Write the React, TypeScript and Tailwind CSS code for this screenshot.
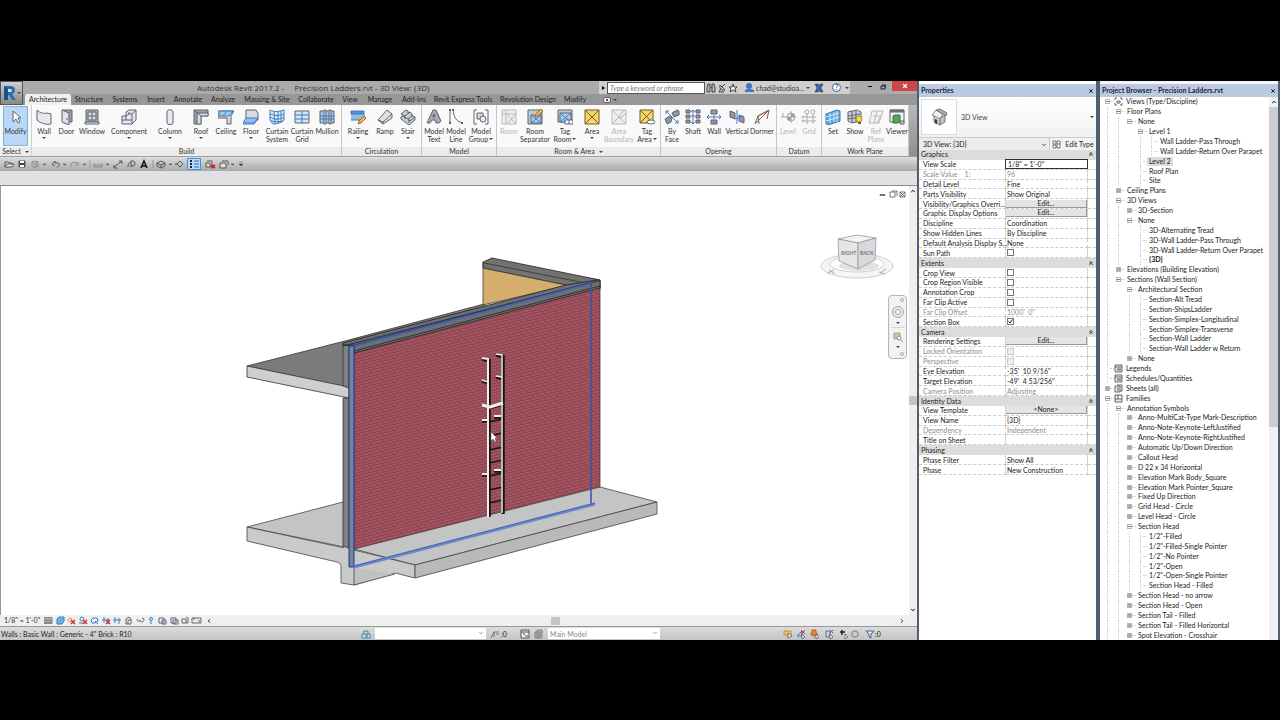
import type { ReactNode } from "react";
import { ChevronDown, ChevronUp, ChevronLeft, ChevronRight, ChevronsUp, X } from "lucide-react";

const LINE = "#5d6470";
const BLUE = "#3d7dbd";

// Ribbon glyphs, all drawn on a 16x16 grid.
const GLYPHS: Record<string, ReactNode> = {
  modify: <path d="M5 2v11l3-3 2 4 2-1-2-4h3z" fill="#fff" stroke={LINE} />,
  wall: <path d="M1 1c3 3 7 4 10 3l4 1v10c-3 1-10 0-14-4z" fill="#e4e7ec" stroke={LINE} />,
  door: (
    <g stroke={LINE}>
      <path d="M3 1h10v12H9" fill="#9aa0aa" />
      <path d="M3 1l7 3v12l-7-3z" fill="#dfe2e7" />
      <path d="M8 9v2" />
    </g>
  ),
  window: (
    <g stroke={LINE}>
      <path d="M2 1h12v12H2z" fill="#aeb4be" />
      <path d="M4 3h8v8H4z" fill="#d6dbe2" />
      <path d="M8 3v8M4 7h8" />
      <path d="M1 13h14v2H1z" fill="#e4e7ec" />
    </g>
  ),
  component: (
    <g stroke={LINE} fill="#e4e7ec">
      <path d="M1 7h4V3l3-2h7v10l-4 4H1z" />
      <path d="M5 7v4H1M5 11h6V5H8l-3 2M11 5l4-4M11 11v4M8 5V3" fill="none" />
    </g>
  ),
  column: <path d="M5 3c0-3 6-3 6 0v11c0 2-6 2-6 0z" fill="#e8eaee" stroke={LINE} />,
  roof: (
    <g stroke={LINE}>
      <path d="M1 1h14v6H8v8H1z" fill="#9ba1ab" />
      <path d="M4 4h11v3H8v8H4z" fill="#d9dce2" />
      <path d="M1 1l7 6" />
    </g>
  ),
  ceiling: (
    <g>
      <path d="M0 9V2h16l-3 5v8H9V9z" fill="#d7dbe1" stroke={LINE} />
      <path d="M3 2h12l-4 5H0z" fill="#9fcbee" stroke={BLUE} />
      <path d="M9 2L5 7" stroke={BLUE} />
    </g>
  ),
  floor: (
    <g>
      <path d="M3 1h10l2 3v7H3z" fill="#d7dbe1" stroke={LINE} />
      <path d="M3 9h12l-4 5H0z" fill="#8dc1ec" stroke={BLUE} />
      <path d="M0 14v1h11l4-5" fill="none" stroke={BLUE} />
    </g>
  ),
  curtainSystem: (
    <g fill="none" stroke={BLUE}>
      <path d="M1 1c4 2 8 2 14 0v10c-5 4-9 4-11 4L1 11z" fill="#dcecf8" />
      <path d="M5 2l1 13M9 2v13M12 2v12M1 5c5 2 9 2 14 0M1 8c5 3 9 3 14 0M2 12c5 1 9 1 12 0" />
    </g>
  ),
  curtainGrid: (
    <g>
      <path d="M1 2h14v12H1z" fill="#d3e6f5" stroke={LINE} />
      <path d="M8 2v12M1 6h14M1 10h14" stroke={BLUE} />
    </g>
  ),
  mullion: (
    <g stroke={LINE}>
      <path d="M1 2h14v12H1z" fill="#9ccbef" />
      <path d="M5 1h2v14H5zM10 1h2v14h-2z" fill="#dfe5ec" />
      <path d="M1 7h14M1 10h14" stroke={BLUE} />
    </g>
  ),
  railing: (
    <g>
      <path d="M1 2h13v3H1z" fill="#4c94d4" stroke={BLUE} />
      <path d="M1 11h10M2 5v6M4 5v6M6 5v6M8 5v6M10 5v6M12 5v4M14 5v3" stroke={BLUE} />
      <path d="M8 15l1-3 5-5 2 2-5 5z" fill="#f2b74b" stroke="#96702c" />
    </g>
  ),
  ramp: (
    <g stroke={LINE}>
      <path d="M1 11L10 1l5 4v4l-9 6z" fill="#dfe2e7" />
      <path d="M1 11l5 2 9-8M6 13v2" fill="none" />
    </g>
  ),
  stair: (
    <g stroke={LINE} fill="#c9cdd4">
      <path d="M1 5l5-4 2 1v2l2-1 2 2v2l3 1v3l-6 5-8-6V8l3-1z" />
      <path d="M1 5l4 2 5-4M4 8l4 2 5-4M8 11l2 1 5-4M5 7v3M9 10v4" fill="none" />
    </g>
  ),
  modelText: (
    <g stroke={LINE}>
      <path d="M1 14L7 1h3l5 11-2 2h-3l-1-3H6l-2 3z" fill="#a4a9b2" />
      <path d="M7 8l1-3 1 3z" fill="#fff" />
    </g>
  ),
  modelLine: (
    <g fill="none" stroke={LINE}>
      <path d="M2 1v13M5 1c1 8 4 12 10 13" />
      <path d="M1 1h2M1 14h2M4 1h2M14 13v2" strokeWidth="2" />
    </g>
  ),
  modelGroup: (
    <g fill="none" stroke={LINE}>
      <path d="M4 1H1v14h3M12 1h3v14h-3" />
      <path d="M4 4h6v6H4z" fill="#d5d8de" />
      <circle cx="10" cy="10" r="3" fill="#eceef1" />
    </g>
  ),
  room: (
    <g fill="#eee" stroke="#b9b9b9">
      <path d="M1 1h14v14H1z" />
      <path d="M5 1v14M1 5h14M6 5l9 10M15 5L6 15" />
    </g>
  ),
  roomSeparator: (
    <g stroke={LINE}>
      <path d="M1 1h14v14H1z" fill="#c3c8d0" />
      <path d="M4 6h10v8H4z" fill="#a6d2f0" />
      <path d="M4 6l10 8M14 6L4 14" stroke={BLUE} />
      <path d="M8 8l1-3 5-5 2 2-5 5z" fill="#f2b74b" stroke="#96702c" />
    </g>
  ),
  tagRoom: (
    <g stroke={LINE}>
      <path d="M1 1h14v12H1z" fill="#c3c8d0" />
      <path d="M3 4h11v9H3z" fill="#a6d2f0" />
      <path d="M3 4l11 9M14 4L3 13" stroke={BLUE} />
      <path d="M8 11h8v4H8zM12 11v4" fill="#fff" />
    </g>
  ),
  area: (
    <g stroke="#6b5d2a">
      <path d="M1 1h14v14H1z" fill="#f7d568" />
      <path d="M1 1l14 14M15 1L1 15" />
    </g>
  ),
  areaBoundary: (
    <g fill="#eee" stroke="#b9b9b9">
      <path d="M1 1h14v14H1z" />
      <path d="M1 1l14 14M15 1L1 15" />
      <path d="M8 9l1-3 5-5 2 2-5 5z" />
    </g>
  ),
  tagArea: (
    <g stroke="#6b5d2a">
      <path d="M1 1h13v13H1z" fill="#f7d568" />
      <path d="M1 1l13 13M14 1L1 14" />
      <ellipse cx="12" cy="13" rx="4" ry="2" fill="#fff" stroke={LINE} />
    </g>
  ),
  byFace: (
    <g>
      <path d="M8 4l5-3 2 1v4l-5 2zM1 10l5-3 2 2-1 4-4 2z" fill="#8f95a0" stroke={LINE} />
      <path d="M2 2l12 12M2 2v3M2 2h3M14 14v-3M14 14h-3" stroke={BLUE} fill="none" />
    </g>
  ),
  shaft: (
    <g>
      <path d="M1 1h4v3H1zM11 1h4v3h-4zM1 6h4v3H1zM11 6h4v3h-4zM1 11h4v3H1zM11 11h4v3h-4z" fill="#9197a1" stroke={LINE} />
      <path d="M8 1v14M6 7h4M6 3l2-2 2 2M6 13l2 2 2-2" stroke={BLUE} fill="none" />
    </g>
  ),
  opening: (
    <g>
      <path d="M5 1h6v4H5zM5 11h6v4H5z" fill="#9197a1" stroke={LINE} />
      <path d="M1 8h14M8 6v4M3 6L1 8l2 2M13 6l2 2-2 2" stroke={BLUE} fill="none" />
    </g>
  ),
  vertical: (
    <g>
      <path d="M1 2l5 2v6L1 8zM10 6l5 2v6l-5-2z" fill="#9197a1" stroke={LINE} />
      <path d="M8 1v14M6 10l8-3" stroke={BLUE} />
    </g>
  ),
  dormer: (
    <g fill="none">
      <path d="M1 15l3-8 11-6-2 9M4 7l1 8" stroke={LINE} />
      <path d="M2 14L14 2M4 7l10-5" stroke="#b0573f" />
    </g>
  ),
  level: (
    <g stroke="#aaa" fill="none">
      <path d="M1 8h15M3 4v4M11 2v12" />
      <circle cx="11" cy="8" r="4" fill="#eee" />
      <path d="M11 8V4a4 4 0 0 1 4 4zM11 8v4a4 4 0 0 1-4-4z" fill="#999" />
    </g>
  ),
  grid: (
    <g stroke="#aaa" fill="#fff">
      <path d="M6 5v10M12 5v10M3 8h12M3 12h12" />
      <circle cx="6" cy="3" r="2" />
      <circle cx="12" cy="3" r="2" />
      <circle cx="2" cy="8" r="1" />
      <circle cx="2" cy="12" r="1" />
    </g>
  ),
  set: (
    <g stroke={BLUE}>
      <path d="M1 5l11-4 3 1v10l-3 1-9 3-2-1z" fill="#5ba6df" />
      <path d="M5 4v10M9 3v10M12 2v11M1 8l13-4M1 12l13-4" stroke="#d6ebfa" />
    </g>
  ),
  show: (
    <g>
      <path d="M1 3l9-2 4 2v9l-9 2-4-2z" fill="#cbd0d8" stroke={LINE} />
      <path d="M5 2v12M9 2v11M1 7l12-2M1 10l12-2" stroke={LINE} />
      <circle cx="12" cy="10" r="3" fill="#ffd54a" stroke="#b78a1c" />
      <path d="M11 14h3" stroke={LINE} strokeWidth="2" />
    </g>
  ),
  refPlane: (
    <g fill="#f3f3f3" stroke="#b9b9b9">
      <path d="M4 2h11l-4 12H1zM5 7h9M9 2L6 14M12 8l-3 6" />
    </g>
  ),
  viewer: (
    <g>
      <path d="M1 1h14v12H1z" fill="#f4f4f4" stroke={LINE} />
      <path d="M1 2h14" stroke="#69707b" strokeWidth="3" />
      <path d="M4 7l2-1h5v6l-2 2H4z" fill="#58a45a" stroke="#35703a" />
      <path d="M11 12h4v3h-4z" fill="#ccc" stroke={LINE} />
    </g>
  ),
};

type Tool = { icon: string; label: string; sub?: string; w: string; arrow?: boolean; off?: boolean };
type Panel = { title: string; w: string; more?: boolean; tools: Tool[] };

const PANELS: Panel[] = [
  {
    title: "Build",
    w: "w-[310px]",
    tools: [
      { icon: "wall", label: "Wall", w: "w-6", arrow: true },
      { icon: "door", label: "Door", w: "w-[21px]" },
      { icon: "window", label: "Window", w: "w-[30px]" },
      { icon: "component", label: "Component", w: "w-11", arrow: true },
      { icon: "column", label: "Column", w: "w-[38px]", arrow: true },
      { icon: "roof", label: "Roof", w: "w-6", arrow: true },
      { icon: "ceiling", label: "Ceiling", w: "w-[26px]" },
      { icon: "floor", label: "Floor", w: "w-6", arrow: true },
      { icon: "curtainSystem", label: "Curtain", sub: "System", w: "w-7" },
      { icon: "curtainGrid", label: "Curtain", sub: "Grid", w: "w-[22px]" },
      { icon: "mullion", label: "Mullion", w: "w-7" },
    ],
  },
  {
    title: "Circulation",
    w: "w-20",
    tools: [
      { icon: "railing", label: "Railing", w: "w-8", arrow: true },
      { icon: "ramp", label: "Ramp", w: "w-[22px]" },
      { icon: "stair", label: "Stair", w: "w-6", arrow: true },
    ],
  },
  {
    title: "Model",
    w: "w-[75px]",
    tools: [
      { icon: "modelText", label: "Model", sub: "Text", w: "w-6" },
      { icon: "modelLine", label: "Model", sub: "Line", w: "w-5" },
      { icon: "modelGroup", label: "Model", sub: "Group", w: "w-[30px]", arrow: true },
    ],
  },
  {
    title: "Room & Area",
    more: true,
    w: "w-[164px]",
    tools: [
      { icon: "room", label: "Room", w: "w-6", off: true },
      { icon: "roomSeparator", label: "Room", sub: "Separator", w: "w-7" },
      { icon: "tagRoom", label: "Tag", sub: "Room", w: "w-8", arrow: true },
      { icon: "area", label: "Area", w: "w-[22px]", arrow: true },
      { icon: "areaBoundary", label: "Area", sub: "Boundary", w: "w-8", off: true },
      { icon: "tagArea", label: "Tag", sub: "Area", w: "w-6", arrow: true },
    ],
  },
  {
    title: "Opening",
    w: "w-[116px]",
    tools: [
      { icon: "byFace", label: "By", sub: "Face", w: "w-[22px]" },
      { icon: "shaft", label: "Shaft", w: "w-5" },
      { icon: "opening", label: "Wall", w: "w-[22px]" },
      { icon: "vertical", label: "Vertical", w: "w-6" },
      { icon: "dormer", label: "Dormer", w: "w-[26px]" },
    ],
  },
  {
    title: "Datum",
    w: "w-[45px]",
    tools: [
      { icon: "level", label: "Level", w: "w-[22px]", off: true },
      { icon: "grid", label: "Grid", w: "w-5", off: true },
    ],
  },
  {
    title: "Work Plane",
    w: "w-[87px]",
    tools: [
      { icon: "set", label: "Set", w: "w-[22px]" },
      { icon: "show", label: "Show", w: "w-[22px]" },
      { icon: "refPlane", label: "Ref", sub: "Plane", w: "w-5", off: true },
      { icon: "viewer", label: "Viewer", w: "w-[22px]" },
    ],
  },
];

const TABS = [
  { label: "Structure", w: "w-9" },
  { label: "Systems", w: "w-9" },
  { label: "Insert", w: "w-[26px]" },
  { label: "Annotate", w: "w-[38px]" },
  { label: "Analyze", w: "w-8" },
  { label: "Massing & Site", w: "w-14" },
  { label: "Collaborate", w: "w-[42px]" },
  { label: "View", w: "w-[26px]" },
  { label: "Manage", w: "w-[34px]" },
  { label: "Add-Ins", w: "w-[34px]" },
  { label: "Revit Express Tools", w: "w-16" },
  { label: "Revolution Design", w: "w-[66px]" },
  { label: "Modify", w: "w-7" },
];

type Prop = {
  name: string;
  kind?: "head" | "edit" | "check" | "input";
  value?: string;
  on?: boolean;
  off?: boolean;
};

const PROPS: Prop[] = [
  { name: "Graphics", kind: "head" },
  { name: "View Scale", kind: "input", value: "1/8\" = 1'-0\"" },
  { name: "Scale Value    1:", value: "96", off: true },
  { name: "Detail Level", value: "Fine" },
  { name: "Parts Visibility", value: "Show Original" },
  { name: "Visibility/Graphics Overri...", kind: "edit", value: "Edit..." },
  { name: "Graphic Display Options", kind: "edit", value: "Edit..." },
  { name: "Discipline", value: "Coordination" },
  { name: "Show Hidden Lines", value: "By Discipline" },
  { name: "Default Analysis Display S...", value: "None" },
  { name: "Sun Path", kind: "check" },
  { name: "Extents", kind: "head" },
  { name: "Crop View", kind: "check" },
  { name: "Crop Region Visible", kind: "check" },
  { name: "Annotation Crop", kind: "check" },
  { name: "Far Clip Active", kind: "check" },
  { name: "Far Clip Offset", value: "1000'  0\"", off: true },
  { name: "Section Box", kind: "check", on: true },
  { name: "Camera", kind: "head" },
  { name: "Rendering Settings", kind: "edit", value: "Edit..." },
  { name: "Locked Orientation", kind: "check", off: true },
  { name: "Perspective", kind: "check", off: true },
  { name: "Eye Elevation", value: "-35'  10 9/16\"" },
  { name: "Target Elevation", value: "-49'  4 53/256\"" },
  { name: "Camera Position", value: "Adjusting", off: true },
  { name: "Identity Data", kind: "head" },
  { name: "View Template", kind: "edit", value: "<None>" },
  { name: "View Name", value: "{3D}" },
  { name: "Dependency", value: "Independent", off: true },
  { name: "Title on Sheet", value: "" },
  { name: "Phasing", kind: "head" },
  { name: "Phase Filter", value: "Show All" },
  { name: "Phase", value: "New Construction" },
];

// [depth, label, toggle] where toggle is "-" open, "+" closed, "" leaf
const TREE: [number, string, string][] = [
  [0, "Views (Type/Discipline)", "-"],
  [1, "Floor Plans", "-"],
  [2, "None", "-"],
  [3, "Level 1", "-"],
  [4, "Wall Ladder-Pass Through", ""],
  [4, "Wall Ladder-Return Over Parapet", ""],
  [3, "Level 2", ""],
  [3, "Roof Plan", ""],
  [3, "Site", ""],
  [1, "Ceiling Plans", "+"],
  [1, "3D Views", "-"],
  [2, "3D-Section", "+"],
  [2, "None", "-"],
  [3, "3D-Alternating Tread", ""],
  [3, "3D-Wall Ladder-Pass Through", ""],
  [3, "3D-Wall Ladder-Return Over Parapet", ""],
  [3, "{3D}", ""],
  [1, "Elevations (Building Elevation)", "+"],
  [1, "Sections (Wall Section)", "-"],
  [2, "Architectural Section", "-"],
  [3, "Section-Alt Tread", ""],
  [3, "Section-ShipsLadder", ""],
  [3, "Section-Simplex-Longitudinal", ""],
  [3, "Section-Simplex-Transverse", ""],
  [3, "Section-Wall Ladder", ""],
  [3, "Section-Wall Ladder w Return", ""],
  [2, "None", "+"],
  [0, "Legends", ""],
  [0, "Schedules/Quantities", ""],
  [0, "Sheets (all)", "+"],
  [0, "Families", "-"],
  [1, "Annotation Symbols", "-"],
  [2, "Anno-MultiCat-Type Mark-Description", "+"],
  [2, "Anno-Note-Keynote-LeftJustified", "+"],
  [2, "Anno-Note-Keynote-RightJustified", "+"],
  [2, "Automatic Up/Down Direction", "+"],
  [2, "Callout Head", "+"],
  [2, "D 22 x 34 Horizontal", "+"],
  [2, "Elevation Mark Body_Square", "+"],
  [2, "Elevation Mark Pointer_Square", "+"],
  [2, "Fixed Up Direction", "+"],
  [2, "Grid Head - Circle", "+"],
  [2, "Level Head - Circle", "+"],
  [2, "Section Head", "-"],
  [3, "1/2\"-Filled", ""],
  [3, "1/2\"-Filled-Single Pointer", ""],
  [3, "1/2\"-No Pointer", ""],
  [3, "1/2\"-Open", ""],
  [3, "1/2\"-Open-Single Pointer", ""],
  [3, "Section Head - Filled", ""],
  [2, "Section Head - no arrow", "+"],
  [2, "Section Head - Open", "+"],
  [2, "Section Tail - Filled", "+"],
  [2, "Section Tail - Filled Horizontal", "+"],
  [2, "Spot Elevation - Crosshair", "+"],
];

// A guide line runs down a level while that level still has a later sibling.
function hasLater(index: number, depth: number) {
  for (let j = index + 1; j < TREE.length; j++) {
    if (TREE[j][0] < depth) return false;
    if (TREE[j][0] === depth) return true;
  }
  return depth < 3;
}

function Caret() {
  return (
    <svg viewBox="0 0 4 2" className="h-0.5 w-1 shrink-0" fill="#444">
      <path d="M0 0h4L2 2z" />
    </svg>
  );
}

function TitleBar() {
  return (
    <div className="flex h-[13px] items-center bg-[#ababab] text-[#333]">
      <h1 className="flex-1 pl-[174px] font-['Open_Sans',sans-serif] text-[8px] leading-[13px] whitespace-pre">
        Autodesk Revit 2017.2 -     Precision Ladders.rvt - 3D View: {"{3D}"}
      </h1>
      <div className="flex h-full shrink-0 items-center bg-[#cfcfcf]">
        <button aria-label="Expand search" className="flex h-full w-2 items-center justify-center">
          <svg viewBox="0 0 3 4" className="h-1 w-[3px]"><path d="M0 0l3 2-3 2z" /></svg>
        </button>
        <input
          aria-label="Search"
          placeholder="Type a keyword or phrase"
          className="h-3 w-[98px] border border-[#555] bg-white px-0.5 text-[7px] italic placeholder:text-[#777]"
        />
        <svg viewBox="0 0 34 12" className="h-3 w-[34px]" fill="none" stroke="#444">
          <path d="M2 10V6l1-4h2v8zM7 10V2h2l1 4v4zM5 5h2" fill="#bbb" />
          <path d="M15 3l5 5M14 10l2-4M14 10h5M20 2l-3 3M15 3c-1 4 2 6 5 5" />
          <path d="M28 2l1 3h3l-2 2 1 3-3-2-3 2 1-3-2-2h3z" fill="#eee" />
        </svg>
        <button className="flex items-center gap-0.5 pl-1.5 text-[7px] leading-[12px] whitespace-nowrap">
          <svg viewBox="0 0 9 9" className="size-[9px]" fill="#3f76c4">
            <circle cx="4" cy="3" r="3" />
            <path d="M0 9V7l3-1h3l3 1v2z" />
          </svg>
          chad@studioa...
          <Caret />
        </button>
        <svg viewBox="0 0 10 10" className="ml-1 size-[10px]">
          <path d="M1 1h3l1 2 1-2h3L7 5l2 4H6L5 7 4 9H1l2-4z" fill="#3b68aa" stroke="#223" strokeWidth="0.5" />
        </svg>
        <button aria-label="Help" className="flex items-center gap-1 pr-px pl-2">
          <span className="flex size-[9px] items-center justify-center rounded-full border border-[#46628e] bg-white text-[7px] leading-[7px] font-bold text-[#2c5aa0]">
            ?
          </span>
          <Caret />
        </button>
      </div>
      <div className="flex h-full shrink-0 items-start">
        <button aria-label="Minimize" className="flex h-[11px] w-[26px] items-center justify-end pr-1">
          <span className="h-px w-1 bg-black" />
        </button>
        <button aria-label="Restore" className="flex h-[11px] w-4 items-center justify-start pl-1">
          <svg viewBox="0 0 6 6" className="size-1.5" fill="none" stroke="#222"><path d="M1 2h4v3H1zM2 1h4v3" /></svg>
        </button>
        <button aria-label="Close" className="flex h-[10px] w-[25px] items-center justify-center bg-[#cf4444] text-white">
          <X className="size-1.5" strokeWidth={5} />
        </button>
      </div>
    </div>
  );
}

function TabRow() {
  return (
    <nav className="flex h-[11px] items-center bg-[#979797] pl-0.5 text-[7px] leading-[11px] text-[#222]">
      <button className="h-full w-[46px] shrink-0 rounded-t-xs bg-[#efefef] whitespace-nowrap">Architecture</button>
      {TABS.map((t) => (
        <button key={t.label} className={`flex h-full shrink-0 justify-center whitespace-nowrap ${t.w}`}>
          {t.label}
        </button>
      ))}
      <button aria-label="Ribbon display" className="ml-3.5 flex items-center gap-0.5">
        <span className="flex h-1.5 w-2 items-center justify-center rounded-xs border border-[#666] bg-[#eee]">
          <span className="size-0.5 bg-[#555]" />
        </span>
        <Caret />
      </button>
    </nav>
  );
}

function Ribbon() {
  return (
    <div className="flex h-[52px] border-b border-[#a0a0a0] bg-linear-to-b from-[#b9b9b9] to-[#8f8f8f]">
      <section className="flex w-8 shrink-0 flex-col items-center border-r border-[#d2d2d2] bg-[#f8f8f8]">
        <div className="flex flex-1 pt-px">
          <button className="flex h-10 w-[25px] flex-col items-center border border-[#86b3dc] bg-[#b8d8f5] pt-0.5 text-[7px] leading-[8px] text-[#333]">
            <svg viewBox="0 0 16 16" className="size-4 shrink-0">{GLYPHS.modify}</svg>
            <span className="mt-0.5">Modify</span>
          </button>
        </div>
        <button className="flex h-[9px] w-full items-center justify-center gap-1 bg-[#ececec] text-[7px] leading-[9px] text-[#333]">
          Select <Caret />
        </button>
      </section>
      {PANELS.map((p) => (
        <section key={p.title} className={`flex shrink-0 flex-col border-r border-[#c6c6c6] bg-[#f9f9f9] ${p.w}`}>
          <div className="flex flex-1">
            {p.tools.map((t) => (
              <button
                key={t.icon}
                className={`flex shrink-0 flex-col items-center pt-1 text-[7px] leading-[8px] whitespace-nowrap ${t.w} ${
                  t.off ? "text-[#b4b4b4]" : "text-[#333]"
                }`}
              >
                <svg viewBox="0 0 16 16" className="mb-0.5 size-4 shrink-0" fill="none">{GLYPHS[t.icon]}</svg>
                <span>{t.label}</span>
                {t.sub && (
                  <span className="flex items-center gap-px">
                    {t.sub}
                    {t.arrow && <Caret />}
                  </span>
                )}
                {t.arrow && !t.sub && <span className="pt-0.5"><Caret /></span>}
              </button>
            ))}
          </div>
          <div className="flex h-[9px] items-center justify-center gap-1 bg-[#ececec] text-[7px] leading-[9px] text-[#333]">
            {p.title} {p.more && <Caret />}
          </div>
        </section>
      ))}
    </div>
  );
}

function QuickAccess() {
  return (
    <div className="flex h-[14px] items-center bg-linear-to-b from-[#dedede] to-[#a9a9a9]">
      <svg viewBox="0 0 246 14" className="h-[14px] w-[246px] shrink-0" fill="none" stroke="#555">
        <path d="M5 10V5h3l1 1h3v1M5 10l2-3h7l-2 3z" fill="#e8e8e8" />
        <path d="M19 4h6v6h-6z" fill="#444" />
        <path d="M20 4h4v2h-4zM20 8h4v2h-4z" fill="#fff" stroke="none" />
        <g stroke="#8c8c8c">
          <path d="M32 5l3-1 3 1v4l-3 2-3-2zM35 7v4M32 5l3 2 3-2M36 8h3" />
          <path d="M71 10V7c0-2 6-2 6 0M78 5v3h-3" />
          <path d="M94 6v4h8V6M94 8h8" />
        </g>
        <path d="M52 7l3-3v2h3c2 0 2 4-1 4M52 7l3 2" />
        <path d="M114 10l8-6M114 8v3h3M119 4h3v3" />
        <path d="M128 10c0-4 2-5 3-5M131 4h2a2 2 0 1 1-1 5l-1 1z" />
        <path d="M141 11l3-7 3 7M142 9h4" stroke="#111" strokeWidth="1.500" />
        <path d="M157 6l4-2 4 2v3l-4 2-4-2zM157 6l4 2 4-2M161 8v3" />
        <path d="M177 7l3-3 3 3-3 3zM177 7h-2" />
        <path d="M187.500 1.500h13v11h-13z" fill="#b9dbf6" stroke="#4b8fce" />
        <path d="M190 4h2M190 7h2M190 10h2" stroke="#222" strokeWidth="2" />
        <path d="M194 4h5M194 7h5M194 10h5" stroke="#36c" />
        <path d="M207 4h5v5M206 6h4v4h-4z" fill="#ddd" />
        <path d="M211 8l4 3M215 8l-4 3" stroke="#c22" strokeWidth="2" />
        <path d="M222 4h6v4M220 6h6v5h-6z" fill="#ddd" />
        <path d="M43 7h3l-1 1zM63 7h3l-1 1zM83 7h3l-1 1zM106 7h3l-1 1zM169 7h3l-1 1zM231 7h3l-1 1zM239 7h4l-2 2zM239 5h4" fill="#333" strokeWidth="0.500" />
        <path d="M90 3v8M153 3v8" stroke="#999" />
      </svg>
    </div>
  );
}

function ModelDrawing() {
  return (
    <svg viewBox="1 186 908 429" className="h-full w-full" strokeLinejoin="round">
      <defs>
        <pattern id="brick" width="6" height="6" patternUnits="userSpaceOnUse" patternTransform="skewY(-14.4)">
          <rect width="6" height="6" fill="#a85662" />
          <path d="M0 0.500h6M0 3.500h6M2 0.500v3M5 3.500v3" stroke="#743a44" strokeWidth="0.600" />
        </pattern>
      </defs>

      {/* floor slab and footing */}
      <g stroke="#444" strokeWidth="0.800">
        <path d="M247 527L343 502L600 487L657 502L415 565L354 549z" fill="#c4c4c4" />
        <path d="M247 527L354 550L415 565V578L395 573L354 585L341 583V566Q341 563 337 562L247 541z" fill="#cacaca" />
        <path d="M415 565L657 502V514L415 578z" fill="#b9b9b9" />
        <path d="M354 568V585L395 574" fill="#c0c0c0" />
      </g>
      <path d="M344 360H600V487L354 549H344z" fill="#c4c4c4" />
      <path d="M247 400H343V501L247 526z" fill="#fff" />

      {/* roof slab */}
      <g stroke="#333" strokeWidth="0.800">
        <path d="M247 366L345 341L484 304L490 320L349 388z" fill="#7b7b7b" />
        <path d="M247 366L349 387V398L247 377z" fill="#cfcfcf" />
      </g>

      {/* inner wall and back parapet */}
      <path d="M483 262V305L570 285L600 290V280z" fill="#d5ad6c" stroke="#444" strokeWidth="0.800" />
      <path d="M483 262L492 258L600 280V288L566 285L483 268z" fill="#727272" stroke="#222" strokeWidth="0.800" />
      <path d="M484 263L590 284" stroke="#333" strokeWidth="0.800" />

      {/* brick wall with cap */}
      <path d="M343 398H349V548L343 546z" fill="#7d8280" stroke="#333" strokeWidth="0.800" />
      <path d="M343 345H349V388L343 386z" fill="#7d8280" stroke="#333" strokeWidth="0.800" />
      <path d="M354 352L600 287V487L354 549z" fill="url(#brick)" stroke="#444" strokeWidth="0.800" />
      <path d="M343 343L566 285L597 280L600 281V288L354 353V345H343z" fill="#6d6f72" stroke="#222" strokeWidth="0.800" />
      <path d="M343 346L598 281M354 351L600 286" stroke="#222" strokeWidth="0.800" />

      {/* selection outline */}
      <path d="M350 347L592 283" stroke="#4a66a0" strokeWidth="2" />
      <path d="M350 346L592 282" stroke="#1f3c9c" strokeWidth="0.800" />
      <path d="M349 346H354V567H349z" fill="#75839b" stroke="#1c3796" />
      <path d="M591 282V504" stroke="#3b50a4" strokeWidth="1.500" />
      <path d="M354 567L595 504" stroke="#6d88c8" strokeWidth="3" />
      <path d="M354 566L595 503" stroke="#3859ae" strokeWidth="0.800" />

      {/* ladder */}
      <g fill="none" stroke="#141414">
        <path d="M489 359V517" strokeWidth="3.500" />
        <path d="M503 355V514" strokeWidth="3.500" />
        <path
          d="M489 409L503 405M489 422L503 419M489 436L503 433M489 450L503 447M489 463L503 460M489 476L503 473M489 490L503 487M489 503L503 500"
          strokeWidth="1.500"
        />
        <path d="M482 359L489 361M496 355L503 357M482 381L489 383M496 377L503 379" strokeWidth="3" />
        <path d="M482 421H489M494 417H502M482 475H489M494 471H502" strokeWidth="3.500" />
      </g>
      <g fill="none" stroke="#f0ede8">
        <path d="M482 358L488 359V517" strokeWidth="2" />
        <path d="M496 354L502 355V513" strokeWidth="1.500" />
        <path d="M482 380L488 382M496 376L502 377" strokeWidth="1.500" />
        <path d="M482 405L490 407L503 403" strokeWidth="3" />
        <path d="M482 420H488M494 416H501M482 474H488M494 470H501" strokeWidth="2" />
      </g>
      <path d="M491 432V441L493 439L495 442L496 441L495 438H497z" fill="#fff" stroke="#555" strokeWidth="0.500" />
    </svg>
  );
}

function ViewCube() {
  return (
    <svg viewBox="820 232 76 50" className="h-[50px] w-[76px]" stroke="#aaa" strokeWidth="0.800">
      <ellipse cx="858" cy="266" rx="36" ry="12" fill="#f5f5f5" stroke="#c4c4c4" />
      <ellipse cx="858" cy="264" rx="27" ry="8" fill="#fff" stroke="#c4c4c4" />
      <ellipse cx="860" cy="266" rx="20" ry="5" fill="#e2e2e2" stroke="none" />
      <path d="M829 273l6-3M836 274l-6-4M880 272l6 2M887 269l-6 4" stroke="#999" />
      <path d="M839 239L858 235L877 238L859 243z" fill="#f3f3f3" stroke="#999" />
      <path d="M839 239L859 243V269L840 261z" fill="#e4e5e8" stroke="#999" />
      <path d="M859 243L877 238L876 260L859 269z" fill="#d8d9dd" stroke="#999" />
      <g fill="#777" stroke="none" fontSize="5" fontWeight="bold">
        <text x="842" y="255">RIGHT</text>
        <text x="861" y="255">BACK</text>
      </g>
    </svg>
  );
}

function Viewport() {
  return (
    <div className="flex min-h-0 flex-1 border-t border-[#8a8a8a] bg-white">
      <main className="relative min-w-0 flex-1 border-l border-[#999]">
        <div className="absolute inset-0">
          <ModelDrawing />
        </div>
        <div className="absolute top-[46px] right-3.5">
          <ViewCube />
        </div>
        <svg viewBox="0 0 28 8" className="absolute top-1 right-0.5 h-2 w-7" fill="none" stroke="#555">
          <path d="M1 4.500h5v1H1zM11 2h5v5h-5zM13 1h5v5M21 2h5v5h-5zM21 2l5 5M26 2l-5 5" strokeWidth="0.800" />
        </svg>
        <div className="absolute top-[109px] right-0.5 flex h-16 w-[19px] flex-col items-center justify-between rounded-sm border border-[#b5b5b5] bg-[#f2f2f2] py-0.5">
          <button aria-label="Close bar" className="mr-0.5 size-1 self-end rounded-full border border-[#aaa]" />
          <button aria-label="Steering wheel" className="flex size-3 items-center justify-center rounded-full border border-[#a5a9b5] bg-[#e6e7ea]">
            <span className="size-1.5 rounded-full border border-[#a5a9b5] bg-white" />
          </button>
          <Caret />
          <hr className="w-3.5 border-[#ccd4de]" />
          <button aria-label="Zoom">
            <svg viewBox="0 0 10 10" className="size-[10px]" fill="none" stroke="#888">
              <path d="M1 1h6v6H1z" fill="#b7d29c" stroke="#94b077" />
              <circle cx="6" cy="6" r="2" fill="#fff" />
              <path d="M8 8l2 2" />
            </svg>
          </button>
          <Caret />
          <button aria-label="Options" className="mr-0.5 size-1 self-end rounded-full border border-[#aaa]" />
        </div>
      </main>
      <div className="flex w-2 flex-col items-center justify-between bg-[#efefef] py-0.5">
        <ChevronUp className="size-1.5" strokeWidth={4} />
        <span className="h-[9px] w-2 bg-[#c4c4c4]" />
        <ChevronDown className="size-1.5" strokeWidth={4} />
      </div>
    </div>
  );
}

function ViewControls() {
  return (
    <div className="flex h-[11px] items-center bg-[#efefef] pl-1 text-[7px] leading-[11px] text-[#333]">
      <span className="w-10 shrink-0 whitespace-nowrap">1/8" = 1'-0"</span>
      <svg viewBox="44 0 158 11" className="h-[11px] w-[158px] shrink-0" fill="none" stroke="#5f6672">
        <path d="M44 2.500h8v6h-8zM46 3v5M48 3v5M50 3v5M44 5h8M44 7h8" strokeWidth="0.800" />
        <path d="M57 4l2-2h5v4l-2 3h-5z" fill="#6bb3e8" stroke={BLUE} />
        <circle cx="70" cy="5" r="2" stroke="#e59a24" />
        <path d="M71 5l4 4M75 5l-4 4" stroke="#c33" strokeWidth="1.500" />
        <circle cx="82" cy="4" r="2" stroke={BLUE} />
        <path d="M79 8h4" />
        <path d="M83 5l4 4M87 5l-4 4" stroke="#c33" strokeWidth="1.500" />
        <path d="M91 5l2-2h4l1 3-3 2h-3zM95 6l3 3" stroke={BLUE} />
        <path d="M102 5h8M104 2v6M108 3v6" stroke={BLUE} />
        <path d="M106 5l4 4M110 5l-4 4" stroke="#c33" strokeWidth="1.500" />
        <path d="M113 5h8M115 2v6M119 3v6" stroke={BLUE} />
        <path d="M126 4l3-2 2 2v5h-5zM128 9V5h3" />
        <path d="M137 4c0 3 3 3 3 1 0 3 4 3 4-1l-2-1" />
        <circle cx="151" cy="4" r="1.500" stroke={BLUE} />
        <path d="M151 6v3" stroke={BLUE} />
        <path d="M159 3h5v5h-5zM162 5h4v4h-4z" />
        <path d="M171 3h5v5h-5zM173 5h5v4h-5z" />
        <path d="M182 4h4v4h-4zM186 2l2 1v5h-2" />
        <path d="M192 3h9v5h-9zM194 3v2M198 6h2" />
      </svg>
      <ChevronLeft className="ml-1 size-1.5 shrink-0" strokeWidth={4} />
      <div className="flex h-full min-w-0 flex-1 items-center justify-center">
        <span className="h-2 w-[9px] bg-[#c4c4c4]" />
      </div>
      <ChevronRight className="mr-3 size-1.5" strokeWidth={4} />
    </div>
  );
}

function StatusSelect({ label, value, w }: { label: string; value: string; w: string }) {
  return (
    <div className={`relative h-[11px] shrink-0 bg-white ${w}`}>
      <select
        aria-label={label}
        className="block h-full w-full appearance-none px-0.5 text-[7px] leading-[10px] text-[#888]"
      >
        <option>{value}</option>
      </select>
      <ChevronDown className="pointer-events-none absolute top-0.5 right-0.5 size-1.5 text-[#888]" strokeWidth={3} />
    </div>
  );
}

function StatusBar() {
  return (
    <footer className="flex h-[14px] items-center border-t border-[#999] bg-linear-to-b from-[#dcdcdc] to-[#c4c4c4] text-[7px] leading-[12px] text-[#222]">
      <p className="w-[361px] shrink-0 pl-px whitespace-nowrap">Walls : Basic Wall : Generic - 4" Brick : R10</p>
      <svg viewBox="0 0 10 10" className="mr-1 size-[10px]" fill="none">
        <path d="M1 5h4v4H1zM6 5h3v4H6z" fill="#cfe2f5" stroke={BLUE} />
        <path d="M3 5V2h4v3" stroke="#3f9c46" />
      </svg>
      <StatusSelect label="Workset" value="" w="w-[111px]" />
      <svg viewBox="0 0 10 10" className="ml-1 size-[10px]" fill="none" stroke="#777"><path d="M1 9l3-6h5M4 3v5M6 5h3" /></svg>
      <span className="w-5 pl-px">:0</span>
      <svg viewBox="0 0 24 10" className="mr-1 h-[10px] w-6" fill="none" stroke="#555">
        <path d="M1 1h8v8H1zM1 3h8M3 5h2M5 7h3" fill="#eee" />
        <path d="M15 3h4v6h-4zM17 1h5v8h-5zM18 4h3M18 6h3" fill="#aaa" stroke="#888" />
      </svg>
      <StatusSelect label="Design option" value="Main Model" w="w-28" />
      <svg viewBox="0 0 92 12" className="ml-auto h-3 w-[92px]" fill="none" stroke="#444">
        <path d="M1 3h7v4H1z" fill="#f1c761" stroke="#c19328" />
        <path d="M14 8l5-5v5z" stroke={BLUE} />
        <path d="M18 2l4 4M22 2l-4 4" stroke="#c33" />
        <path d="M29 2h4v3h1v2h-6V5h1zM31 7v3" fill="#e88a3f" stroke="#b6641f" />
        <path d="M43 3h4v6h-4z" stroke={BLUE} />
        <path d="M47 2l3 3M50 2l-3 3" stroke="#c33" />
        <path d="M57 4h5M59 2v5" stroke="#222" strokeWidth="1.500" />
        <path d="M5 5v5l4-2zM19 6v5l3-2zM33 6v5l3-2zM47 6v5l3-2zM62 6v5l3-2z" fill="#fff" strokeWidth="0.700" />
        <circle cx="72" cy="6" r="3" stroke="#999" strokeWidth="1.500" />
        <path d="M83 3h8L88 6v4l-2-1V6z" fill="#dfe8f2" stroke="#46628e" />
      </svg>
      <span className="w-[42px]">:0</span>
    </footer>
  );
}

function PropValue({ row, id }: { row: Prop; id: string }) {
  if (row.kind === "input") {
    return (
      <input
        id={id}
        defaultValue={row.value}
        className="block h-2 w-full bg-white px-0.5 text-[7px] leading-[8px] outline outline-[#333]"
      />
    );
  }
  if (row.kind === "edit") {
    return (
      <button
        id={id}
        className="block h-2 w-full border-r border-b border-[#999] bg-[#e4e4e4] text-center text-[7px] leading-[7px]"
      >
        {row.value}
      </button>
    );
  }
  if (row.kind === "check") {
    return (
      <span className="relative ml-px block size-[7px]">
        <input
          id={id}
          type="checkbox"
          defaultChecked={row.on}
          disabled={row.off}
          className="peer block size-[7px] appearance-none border border-[#777] bg-white disabled:border-[#ccc] disabled:bg-[#eee]"
        />
        <svg viewBox="0 0 7 7" className="pointer-events-none absolute inset-0 hidden size-[7px] peer-checked:block" fill="none" stroke="#111">
          <path d="M1.500 3.500L3 5l2.500-3.500" />
        </svg>
      </span>
    );
  }
  return <span className="block pl-px whitespace-pre">{row.value}</span>;
}

function DockHeader({ title }: { title: string }) {
  return (
    <header className="flex h-[13px] shrink-0 items-center justify-between bg-[#bbcae0] px-0.5 text-[7px] leading-[13px] font-bold text-[#1d2733]">
      <h2>{title}</h2>
      <button aria-label={`Close ${title}`}><X className="size-1.5" strokeWidth={4} /></button>
    </header>
  );
}

function Properties() {
  return (
    <aside className="flex w-[181px] shrink-0 flex-col border-x-2 border-[#4f5f70] bg-white pt-[3px]">
      <DockHeader title="Properties" />
      <button className="flex h-[41px] shrink-0 items-center border-b border-[#ccc] bg-linear-to-b from-white to-[#f1f1f1] px-0.5 text-[7px] text-[#444]">
        <span className="flex size-9 items-center justify-center border border-[#ddd] bg-white">
          <svg viewBox="0 0 18 18" className="size-[18px]" stroke="#666" strokeWidth="0.800" strokeLinejoin="round">
            <path d="M4 7l6 3v7l-6-3z" fill="#dcdee3" />
            <path d="M10 10l5-3v7l-5 3z" fill="#bcc0c8" />
            <path d="M2 7l4-5 7 4-3 5-4-2z" fill="#eceef1" />
            <path d="M6 2l4-1 7 4-1 3-3-2z" fill="#a9aeb8" />
            <path d="M5 11l2 1v4l-2-1z" fill="#222" />
          </svg>
        </span>
        <span className="flex-1 pl-1 text-left">3D View</span>
        <Caret />
      </button>
      <div className="flex h-3 shrink-0 items-center bg-[#f4f4f4] text-[7px] leading-[12px] text-[#222]">
        <div className="relative h-full flex-1">
          <select aria-label="View" className="block h-full w-full appearance-none bg-[#ebebeb] px-1 leading-[12px]">
            <option>3D View: {"{3D}"}</option>
          </select>
          <ChevronDown className="pointer-events-none absolute top-1 right-0.5 size-1.5" strokeWidth={3} />
        </div>
        <button className="flex h-full w-[47px] items-center justify-center gap-1 border-l border-[#ccc] whitespace-nowrap">
          <svg viewBox="0 0 9 9" className="size-[9px]" fill="#fff" stroke="#555" strokeWidth="0.800">
            <path d="M1 1h3v3H1zM5 1h3v7H5zM1 5h3v3H1zM5 4h3" />
          </svg>
          Edit Type
        </button>
      </div>
      <table className="h-[325px] w-full table-fixed border-separate border-spacing-0 text-[7px] leading-[8px] text-[#222]">
        <colgroup>
          <col className="w-[87px]" />
          <col />
          <col className="w-2" />
        </colgroup>
        <tbody>
          {PROPS.map((row, i) => {
            const id = `prop-${i}`;
            if (row.kind === "head") {
              return (
                <tr key={id} className="bg-[#dcdcdc]">
                  <th colSpan={2} className="border-b border-[#dcdcdc] p-0 pl-0.5 text-left font-normal">{row.name}</th>
                  <td className="border-b border-[#dcdcdc] p-0"><ChevronsUp className="size-1.5" strokeWidth={4} /></td>
                </tr>
              );
            }
            return (
              <tr key={id} className={row.off ? "text-[#8c8c8c]" : ""}>
                <th className="border-r border-b border-dashed border-[#ccc] p-0 pl-1 text-left font-normal whitespace-pre">
                  {row.kind ? <label htmlFor={id} className="block">{row.name}</label> : row.name}
                </th>
                <td className="border-r border-b border-dashed border-[#ccc] p-0">
                  <PropValue row={row} id={id} />
                </td>
                <td className="border-b border-dashed border-[#ccc] p-0" />
              </tr>
            );
          })}
        </tbody>
      </table>
    </aside>
  );
}

function TreeRow({ index }: { index: number }) {
  const [depth, label, toggle] = TREE[index];
  const levels = Array.from({ length: depth }, (_, k) => k);
  return (
    <li className="flex min-h-0 flex-1 items-center text-[7px] leading-[9px] whitespace-nowrap text-[#222]">
      {levels.map((k) => (
        <span key={k} className="flex h-full w-[11px] shrink-0 pl-[5px]">
          {hasLater(index, k) && <span className="border-l border-dotted border-[#ccc]" />}
        </span>
      ))}
      {toggle ? (
        <button
          aria-label={toggle === "-" ? `Collapse ${label}` : `Expand ${label}`}
          className="ml-[3px] flex size-[5px] shrink-0 items-center justify-center border border-[#b5b5b5] bg-white"
        >
          <span className={toggle === "-" ? "h-px w-[3px] bg-[#777]" : "size-[3px] bg-[#aaa]"} />
        </button>
      ) : (
        <span className="ml-[5px] h-full w-[3px] shrink-0 border-l border-dotted border-[#ccc]" />
      )}
      <span className="w-1 shrink-0 border-t border-dotted border-[#ccc]" />
      {depth === 0 && (
        <svg viewBox="0 0 9 9" className="mr-px size-[9px] shrink-0" fill="none" stroke="#666">
          {index === 0 ? (
            <path d="M1 3V1h2M6 1h2v2M8 6v2H6M3 8H1V6M3 4h3v2H3z" />
          ) : label === "Families" ? (
            <path d="M1 1h7v7H1zM4 1v4h4M4 5H1" fill="#e8ecf2" />
          ) : label === "Sheets (all)" ? (
            <path d="M1 2h5v6H1zM3 1h5v6H6M3 4h2M3 6h2" fill="#e8ecf2" />
          ) : (
            <path d="M1 1h7v7H1zM1 3h7M3 5h4M3 6h4" fill="#e8ecf2" />
          )}
        </svg>
      )}
      <span className={`px-0.5 ${label === "Level 2" ? "bg-[#dcdcdc]" : ""} ${label === "{3D}" ? "font-bold" : ""}`}>
        {label}
      </span>
    </li>
  );
}

function ProjectBrowser() {
  return (
    <aside className="flex w-[182px] shrink-0 flex-col border-x-2 border-[#4f5f70] bg-[#f2f4f7] pt-[3px]">
      <DockHeader title="Project Browser - Precision Ladders.rvt" />
      <div className="flex min-h-0 flex-1 bg-white pl-0.5">
        <ul className="flex min-w-0 flex-1 flex-col overflow-hidden">
          {TREE.map((_, i) => (
            <TreeRow key={i} index={i} />
          ))}
        </ul>
        <div className="flex w-[9px] flex-col items-center bg-[#f0f0f0]">
          <ChevronUp className="my-0.5 size-1.5 shrink-0" strokeWidth={4} />
          <span className="h-[59%] w-full bg-[#cdcdcd]" />
        </div>
      </div>
    </aside>
  );
}

export default function App() {
  return (
    <div className="flex min-h-screen flex-col bg-black pt-[81px] pb-20 font-['Lato','Open_Sans',sans-serif]">
      <div className="flex flex-1 bg-[#e7e9ec]">
        <div className="flex min-w-0 flex-1 flex-col overflow-hidden">
          <div className="flex">
            <button
              aria-label="Application menu"
              className="flex h-6 w-[23px] shrink-0 items-center justify-center gap-px border border-[#555] bg-linear-to-b from-[#d0d0d0] to-[#888]"
            >
              <svg viewBox="0 0 14 16" className="h-4 w-[14px]">
                <path d="M2 1h6q5 0 5 4 0 3-3 4l4 6h-4l-3-5H6v5H2z" fill="#2b6cb0" />
                <path d="M2 1l4 3v11H2z" fill="#1c4f8c" />
                <path d="M6 4h2q2 0 2 1.500T8 7H6z" fill="#d5e6f5" />
              </svg>
              <Caret />
            </button>
            <div className="min-w-0 flex-1">
              <TitleBar />
              <TabRow />
            </div>
          </div>
          <Ribbon />
          <QuickAccess />
          <div className="h-[14px] bg-[#dfe1e4]" />
          <Viewport />
          <ViewControls />
          <StatusBar />
        </div>
        <Properties />
        <ProjectBrowser />
      </div>
    </div>
  );
}
